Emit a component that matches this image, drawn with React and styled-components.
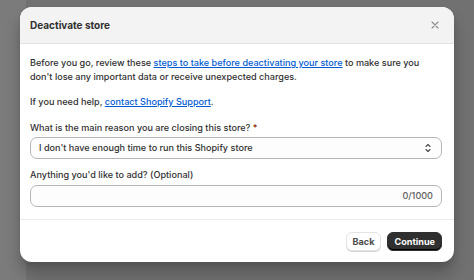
import React from "react";
import styled, { createGlobalStyle } from "styled-components";

const Global = createGlobalStyle`
  html, body { margin: 0; padding: 0; }
  body {
    width: 474px; height: 280px; overflow: hidden;
    background: #727272;
    font-family: Inter, "Noto Sans", sans-serif;
  }
`;

const Backdrop = styled.div`
  width: 474px;
  height: 280px;
  display: flex;
  justify-content: center;
  padding-top: 7px;
  box-sizing: border-box;
  background: linear-gradient(90deg, #7b7b7b 0 26px, #717171 26px 100%);
`;

const Modal = styled.div`
  width: 434px;
  height: 255px;
  background: #ffffff;
  border-radius: 12px;
  overflow: hidden;
  display: flex;
  flex-direction: column;
  box-shadow: 0 12px 16px rgba(0, 0, 0, 0.2), 0 4px 6px rgba(0, 0, 0, 0.1);
`;

const Header = styled.div`
  height: 37px;
  box-sizing: border-box;
  background: #f3f3f3;
  border-bottom: 1px solid #e3e3e3;
  display: flex;
  align-items: center;
  justify-content: space-between;
  padding: 0 14px 0 10px;
`;

const Title = styled.h2`
  margin: 0;
  font-size: 10px;
  font-weight: 650;
  color: #303030;
`;

const Close = styled.button`
  border: 0;
  background: none;
  padding: 0;
  width: 10px;
  height: 10px;
  display: flex;
  align-items: center;
  justify-content: center;
  color: #8a8a8a;
`;

const Body = styled.div`
  flex: 1;
  padding: 12px 12px 0 10px;
  display: flex;
  flex-direction: column;
  color: #303030;
  font-size: 9.1px;
  line-height: 14px;
  font-weight: 450;
`;

const P = styled.p`
  margin: 0 0 ${(p) => p.$mb || 0}px;
`;

const Link = styled.a`
  color: #005bd3;
  text-decoration: underline;
`;

const Label = styled.div`
  margin-bottom: ${(p) => p.$mb || 2}px;
`;

const Req = styled.span`
  color: #8e1f0b;
`;

const Field = styled.div`
  height: 22px;
  box-sizing: border-box;
  border: 1px solid #b5b5b5;
  border-radius: 7px;
  background: #fdfdfd;
  display: flex;
  align-items: center;
  justify-content: space-between;
  padding: 0 ${(p) => p.$pr || 8}px 0 8px;
  margin-bottom: ${(p) => p.$mb || 0}px;
`;

const Muted = styled.span`
  color: #616161;
`;

const Footer = styled.div`
  height: 43px;
  box-sizing: border-box;
  border-top: 1px solid #ebebeb;
  display: flex;
  align-items: center;
  justify-content: flex-end;
  gap: 6px;
  padding: 0 12px 0 0;
`;

const Button = styled.button`
  height: 19px;
  padding: 0 6px;
  border-radius: 6px;
  font-family: inherit;
  font-size: 9.1px;
  font-weight: 650;
  border: 1px solid ${(p) => (p.$primary ? "#303030" : "#e3e3e3")};
  background: ${(p) => (p.$primary ? "#303030" : "#ffffff")};
  color: ${(p) => (p.$primary ? "#ffffff" : "#4a4a4a")};
  box-shadow: ${(p) =>
    p.$primary ? "inset 0 -1px 0 #000" : "0 1px 0 #d4d4d4"};
`;

export default function App() {
  return (
    <>
      <Global />
      <Backdrop>
        <Modal>
          <Header>
            <Title>Deactivate store</Title>
            <Close aria-label="Close">
              <svg width="8" height="8" viewBox="0 0 8 8">
                <path d="M1 1l6 6M7 1L1 7" stroke="currentColor" strokeWidth="1.1" strokeLinecap="round" />
              </svg>
            </Close>
          </Header>
          <Body>
            <P $mb={11}>
              Before you go, review these <Link href="#">steps to take before deactivating your store</Link> to make
              sure you don't lose any important data or receive unexpected charges.
            </P>
            <P $mb={12}>
              If you need help, <Link href="#">contact Shopify Support</Link>.
            </P>
            <Label $mb={2}>
              What is the main reason you are closing this store? <Req>*</Req>
            </Label>
            <Field $mb={9} $pr={9}>
              <span>I don't have enough time to run this Shopify store</span>
              <svg width="8" height="12" viewBox="0 0 8 12">
                <path d="M2 4.5L4 2.5L6 4.5M2 7.5L4 9.5L6 7.5" fill="none" stroke="#4a4a4a" strokeWidth="1.1" strokeLinecap="round" strokeLinejoin="round" />
              </svg>
            </Field>
            <Label $mb={3}>Anything you'd like to add? (Optional)</Label>
            <Field $pr={8}>
              <span />
              <Muted>0/1000</Muted>
            </Field>
          </Body>
          <Footer>
            <Button>Back</Button>
            <Button $primary>Continue</Button>
          </Footer>
        </Modal>
      </Backdrop>
    </>
  );
}
